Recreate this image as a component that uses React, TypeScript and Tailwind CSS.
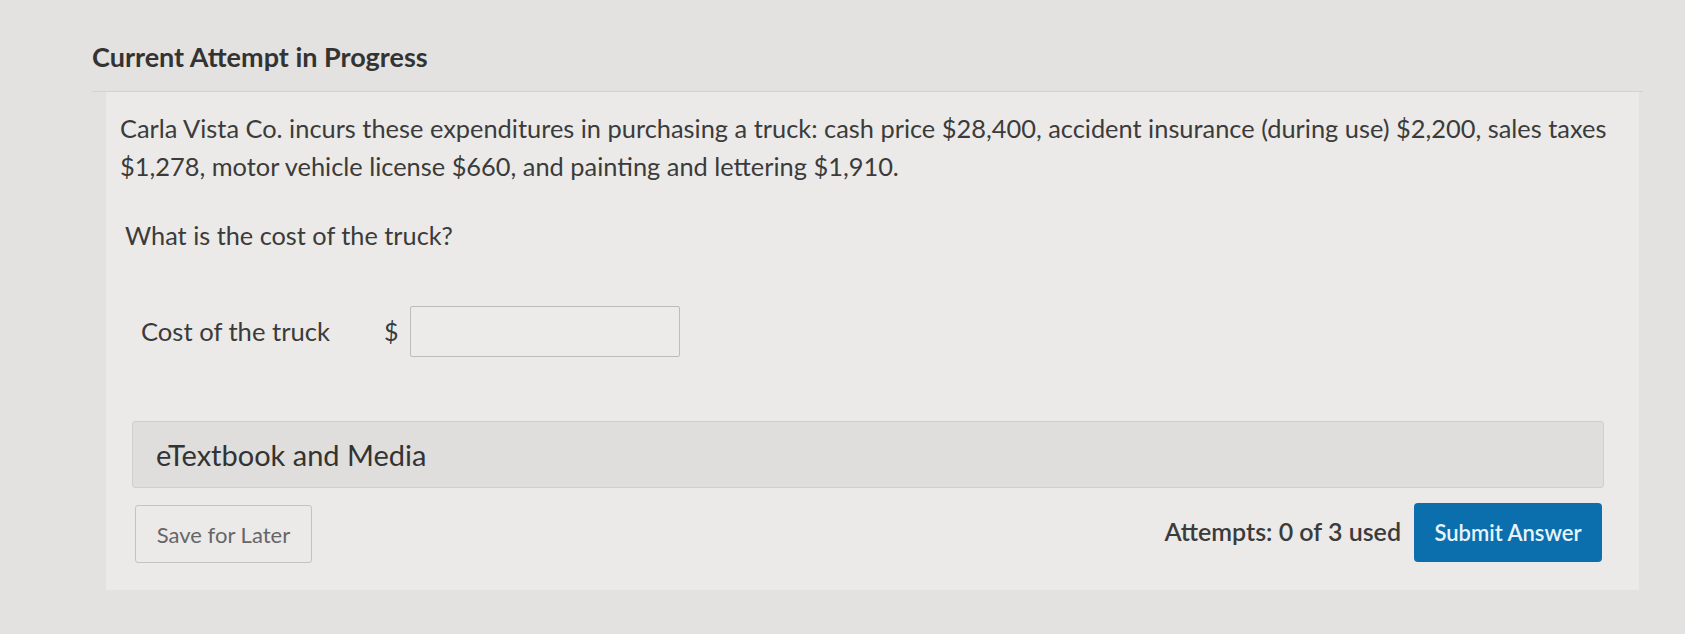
import React, { useState } from 'react';

const App: React.FC = () => {
  const [cost, setCost] = useState('');

  return (
    <div
      className="min-h-screen w-full bg-[#e3e2e0] text-[#3b3b3b]"
      style={{ fontFamily: 'Lato, "Open Sans", sans-serif' }}
    >
      <div className="pl-[92px] pr-[42px] pt-[40px]">
        <h2 className="text-[27px] font-bold leading-[34px] text-[#333]">Current Attempt in Progress</h2>
        <div className="mt-[17px] border-t border-[#d3d2cf]" />
      </div>

      <div className="ml-[106px] mr-[46px] bg-[#ebeae8] pb-[27px] pl-[14px] pr-[2px] pt-[17px]">
        <p className="text-[25.4px] leading-[38px]">
          Carla Vista Co. incurs these expenditures in purchasing a truck: cash price $28,400, accident insurance (during
          use) $2,200, sales taxes $1,278, motor vehicle license $660, and painting and lettering $1,910.
        </p>

        <p className="ml-[5px] mt-[31px] text-[25.3px] leading-[39px]">What is the cost of the truck?</p>

        <div className="ml-[21px] mt-[51px] flex items-center">
          <span className="w-[243px] text-[25.6px]">Cost of the truck</span>
          <span className="w-[26px] text-[25px]">$</span>
          <input
            value={cost}
            onChange={(e) => setCost(e.target.value)}
            className="h-[51px] w-[270px] rounded-[2px] border border-[#bdbcb9] bg-[#ecebe9] px-2 text-[22px] outline-none"
          />
        </div>

        <div className="ml-[12px] mr-[33px] mt-[64px] flex h-[67px] items-center rounded-[3px] border border-[#cfcecb] bg-[#dfdedc] pl-[23px]">
          <span className="text-[29px] text-[#333]">eTextbook and Media</span>
        </div>

        <div className="ml-[15px] mr-[35px] mt-[13px] flex items-center justify-between">
          <button
            type="button"
            className="mt-[4px] h-[58px] w-[177px] rounded-[3px] border border-[#c4c3c0] bg-[#ebeae8] text-[22px] text-[#666]"
          >
            Save for Later
          </button>
          <div className="flex items-center gap-[13px]">
            <span className="text-[25px] font-semibold text-[#3b3b3b]">Attempts: 0 of 3 used</span>
            <button
              type="button"
              className="h-[59px] w-[188px] rounded-[4px] bg-[#0b6fae] text-[22px] font-semibold text-[#e8f4fb]"
            >
              Submit Answer
            </button>
          </div>
        </div>
      </div>
    </div>
  );
};

export default App;
